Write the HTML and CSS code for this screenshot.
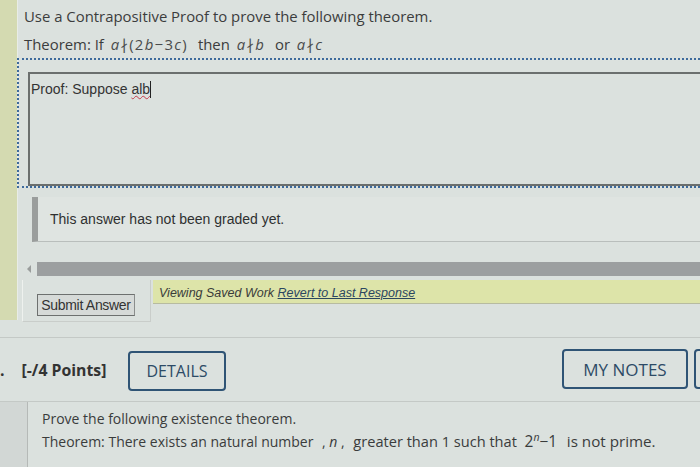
FILE: index.html
```html
<!DOCTYPE html>
<html>
<head>
<meta charset="utf-8">
<link rel="stylesheet" href="styles.css">
</head>
<body>
<div class="page">
  <section class="top">
    <div class="strip"></div>
    <div class="panel">
      <div class="question">
        <p>Use a Contrapositive Proof to prove the following theorem.</p>
        <p>Theorem: If <span class="m first"><i>a</i>∤(2<i>b</i>−3<i>c</i>)</span> then <span class="m"><i>a</i>∤<i>b</i></span> or <span class="m"><i>a</i>∤<i>c</i></span></p>
      </div>
      <div class="focus">
        <div class="answer">Proof: Suppose <span class="spell">alb</span><span class="caret"></span></div>
      </div>
      <div class="graded">This answer has not been graded yet.</div>
      <div class="scroll">
        <span class="arrow"></span>
        <div class="bar"></div>
      </div>
      <div class="actions">
        <div class="submitframe"><button class="submit">Submit Answer</button></div>
        <div class="saved"><i>Viewing Saved Work <a class="revert">Revert to Last Response</a></i></div>
      </div>
    </div>
  </section>
  <section class="header">
    <div class="points"><span class="num">5.</span>[-/4 Points]</div>
    <button class="btn details">DETAILS</button>
    <div class="spacer"></div>
    <button class="btn notes">MY NOTES</button>
    <button class="btn next"></button>
  </section>
  <section class="body2">
    <div class="side"></div>
    <div class="content">
      <p>Prove the following existence theorem.</p>
      <p>Theorem: There exists an natural number <span class="m">, <i>n</i> ,</span> <span class="wide">greater than 1 such that</span> <span class="m big">2<sup><i>n</i></sup>−1</span> <span class="wider">is not prime.</span></p>
    </div>
  </section>
  <svg class="cursor" width="16" height="22" viewBox="0 0 16 22"><path d="M1 1 L1 16 L5 12.5 L8 19 L10.5 18 L7.6 11.6 L13 11.6 Z" fill="#e4e9e6" stroke="#555" stroke-width="1.3" stroke-linejoin="round"/></svg>
</div>
</body>
</html>
```
FILE: styles.css
```css
html, body {
  margin: 0;
  padding: 0;
}
body {
  width: 700px;
  height: 467px;
  overflow: hidden;
  background: #dbe1de;
  font-family: "Open Sans", "DejaVu Sans", sans-serif;
  color: #3a3c3c;
}
.page {
  position: relative;
  width: 700px;
  height: 467px;
  overflow: hidden;
}
p { margin: 0; }

.top {
  display: flex;
  height: 322px;
}
.strip {
  width: 17px;
  height: 320px;
  background: #d4dab1;
  border-right: 1px solid #e8ece6;
  flex: none;
}
.panel {
  flex: 1;
  min-width: 0;
  display: flex;
  flex-direction: column;
}
.question {
  padding: 2px 0 0 6px;
  font-size: 14.9px;
  line-height: 28px;
  height: 56px;
  color: #3b3d3d;
}
.question .m {
  margin: 0 6px 0 3px;
  color: #4a4c4c;
  letter-spacing: 1.3px;
}
.question .m.first { margin-left: 3px; }

.focus {
  margin-left: -1px;
  margin-right: -20px;
  border: 2px dotted #3d6a9c;
  border-right: none;
  padding: 12px 0 5px 9px;
  height: 109px;
}
.answer {
  height: 105px;
  border: 2px solid #6b6f6e;
  border-right: none;
  padding: 5px 0 0 1px;
  font-family: "Liberation Sans", Arial, sans-serif;
  font-size: 14px;
  line-height: 20px;
  color: #333;
}
.spell {
  text-decoration: underline wavy #c43a4a;
  text-decoration-thickness: 1px;
}
.caret {
  display: inline-block;
  width: 1px;
  height: 17px;
  background: #222;
  vertical-align: -4px;
}

.graded {
  margin: 9px 0 0 14px;
  height: 44px;
  border-left: 6px solid #9a9d9c;
  border-bottom: 1px solid #b9bebc;
  background: #dfe4e1;
  padding-left: 12px;
  font-family: "Liberation Sans", Arial, sans-serif;
  font-size: 14px;
  line-height: 44px;
  color: #2e3030;
}

.scroll {
  margin: 20px 0 0 9px;
  display: flex;
  align-items: center;
  height: 14px;
}
.arrow {
  width: 0;
  height: 0;
  border-top: 4px solid transparent;
  border-bottom: 4px solid transparent;
  border-right: 4px solid #9a9d9c;
  margin-right: 6px;
}
.bar {
  flex: 1;
  height: 14px;
  background: #9c9fa0;
}

.actions {
  margin-top: 4px;
  display: flex;
  align-items: flex-start;
}
.submitframe {
  margin-left: 4px;
  width: 113px;
  height: 28px;
  padding: 13px 0 0 14px;
  border-left: 1px solid #eef1ee;
  border-right: 1px solid #c9cdca;
  border-bottom: 1px solid #c9cdca;
}
.submit {
  width: 98px;
  height: 22px;
  padding: 0;
  border: 1px solid #6d706f;
  border-right-color: #8a8d8c;
  background: #d6dad8;
  font-family: "Liberation Sans", Arial, sans-serif;
  font-size: 14px;
  color: #333;
  letter-spacing: -0.3px;
}
.saved {
  margin-left: 2px;
  flex: 1;
  height: 23px;
  background: #dde4a9;
  border-bottom: 1px solid #b7bba0;
  padding-left: 6px;
  font-family: "Liberation Sans", Arial, sans-serif;
  font-size: 12.5px;
  line-height: 26px;
  color: #3a3c3a;
}
.revert {
  text-decoration: underline;
  color: #2b4660;
}

.header {
  margin-top: 15px;
  height: 63px;
  border-top: 1px solid #c4c9c6;
  border-bottom: 1px solid #c4c9c6;
  display: flex;
  align-items: center;
}
.points {
  margin-left: -9px;
  font-weight: 700;
  font-size: 15.8px;
  color: #333;
  width: 137px;
  flex: none;
}
.num { margin-right: 17px; }
.btn {
  font-family: "Open Sans", "DejaVu Sans", sans-serif;
  font-size: 16px;
  color: #2d4b66;
  background: transparent;
  border: 2px solid #2f5475;
  border-radius: 4px;
  padding: 0;
  flex: none;
}
.details {
  width: 98px;
  height: 40px;
  margin-top: 3px;
}
.spacer { flex: 1; }
.notes {
  width: 126px;
  height: 40px;
  margin-top: -1px;
  font-size: 17px;
}
.next {
  width: 60px;
  height: 40px;
  margin-left: 6px;
  margin-right: -54px;
  margin-top: -2px;
}

.body2 {
  display: flex;
  height: 66px;
}
.side {
  width: 27px;
  background: #d2d7d5;
  border-right: 1px solid #b5b9b7;
  flex: none;
}
.content {
  padding: 6px 0 0 14px;
  font-size: 14px;
  line-height: 22px;
  color: #3a3c3c;
  white-space: nowrap;
}
.content .m { margin: 0 5px; }
.content .big { font-size: 15.5px; margin: 0 6px 0 4px; }
.content sup { font-size: 10.5px; line-height: 0; }
.content .wide { font-size: 14.6px; }
.content .wider { font-size: 15.2px; }
```
